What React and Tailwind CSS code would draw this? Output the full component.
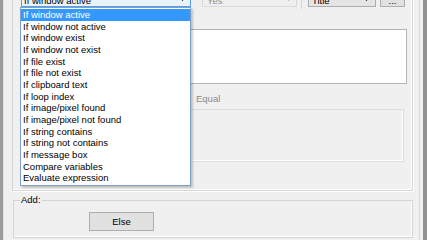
import React from "react";

const items = [
  "If window active",
  "If window not active",
  "If window exist",
  "If window not exist",
  "If file exist",
  "If file not exist",
  "If clipboard text",
  "If loop index",
  "If image/pixel found",
  "If image/pixel not found",
  "If string contains",
  "If string not contains",
  "If message box",
  "Compare variables",
  "Evaluate expression",
];

function Arrow({ color = "#000" }) {
  return (
    <svg width="7" height="4" viewBox="0 0 7 4" className="shrink-0">
      <path d="M0 0 L7 0 L3.5 4 Z" fill={color} />
    </svg>
  );
}

export default function App() {
  return (
    <div
      className="relative w-[427px] h-[240px] overflow-hidden bg-[#f0f0f0] flex text-[9.5px] text-black"
      style={{ fontFamily: '"Liberation Sans", Arial, sans-serif' }}
    >
      {/* left window edge */}
      <div className="w-[3px] h-full bg-[#9c9c9c] shrink-0" />
      <div className="w-px h-full bg-[#e4e4e4] shrink-0" />

      {/* main area */}
      <div className="w-[415px] h-full flex flex-col shrink-0">
        {/* upper group box (top is above the view) */}
        <div className="ml-[8px] mt-[-20px] w-[401px] h-[211px] border-l border-r border-b border-[#d5d5d5] shadow-[inset_-1px_-1px_0_#ffffff,1px_1px_0_#ffffff] pl-[8px] pt-[11px] flex flex-col shrink-0">
          {/* top row */}
          <div className="flex items-start h-[16px]">
            <div className="w-[170px] h-[16px] border border-[#569de5] bg-[#eaf3fc] flex items-center pl-[2px] pr-[4px]">
              <span className="flex-1 leading-[12px] pt-[4px]">If window active</span>
              <Arrow />
            </div>
            <div className="ml-[11px] w-[95px] h-[16px] border border-[#d9d9d9] bg-[#efefef] flex items-center pl-[4px] pr-[4px]">
              <span className="flex-1 leading-[12px] pt-[4px] text-[#8d8d8d]">Yes</span>
              <Arrow color="#a5a5a5" />
            </div>
            <div className="ml-[4px] w-px h-[18px] bg-[#d5d5d5]" />
            <div className="ml-[6px] w-[68px] h-[16px] border border-[#acacac] bg-[#e5e5e5] flex items-center pl-[3px] pr-[5px]">
              <span className="flex-1 leading-[12px] pt-[4px]">Title</span>
              <Arrow />
            </div>
            <div className="ml-[4px] w-[25px] h-[16px] border border-[#adadad] bg-[#e1e1e1] flex items-center justify-center">
              <span className="leading-[12px] pt-[4px]">...</span>
            </div>
          </div>

          {/* text box */}
          <div className="mt-[22px] w-[386px] h-[55px] bg-white border border-[#b5b5b5]" />

          {/* label */}
          <div className="mt-[9px] ml-[175px] leading-[12px] text-[#8a8a8a]">Equal</div>

          {/* disabled box */}
          <div className="mt-[4px] w-[383px] h-[53px] border border-[#dcdcdc] shadow-[inset_-1px_-1px_0_#ffffff]" />
        </div>

        {/* Add group box */}
        <fieldset className="ml-[9px] mt-[3px] w-[400px] h-[44px] border border-[#d5d5d5] shadow-[inset_-1px_-1px_0_#ffffff] shrink-0">
          <legend className="ml-[6px] px-[1px] leading-[12px]">Add:</legend>
          <div className="ml-[75px] mt-[6px] w-[65px] h-[19px] border border-[#adadad] bg-[#e1e1e1] flex items-center justify-center">
            <span className="leading-[12px]">Else</span>
          </div>
        </fieldset>
      </div>

      {/* right window edge */}
      <div className="w-px h-full bg-[#dadada] shrink-0" />
      <div className="w-[3px] h-full bg-[#f0f0f0] shrink-0" />
      <div className="flex-1 h-full bg-[#929292]" />

      {/* open drop-down list */}
      <div className="absolute left-[20px] top-[7px] w-[171px] border border-[#7e9fc8] bg-white shadow-[2px_2px_2px_rgba(0,0,0,0.2)] flex flex-col py-px">
        {items.map((t, i) => (
          <div
            key={t}
            className={
              i === 0
                ? "h-[11.67px] leading-[11.67px] pl-[2px] bg-[#3399ff] text-white whitespace-nowrap"
                : "h-[11.67px] leading-[11.67px] pl-[2px] whitespace-nowrap"
            }
          >
            {t}
          </div>
        ))}
      </div>
    </div>
  );
}
